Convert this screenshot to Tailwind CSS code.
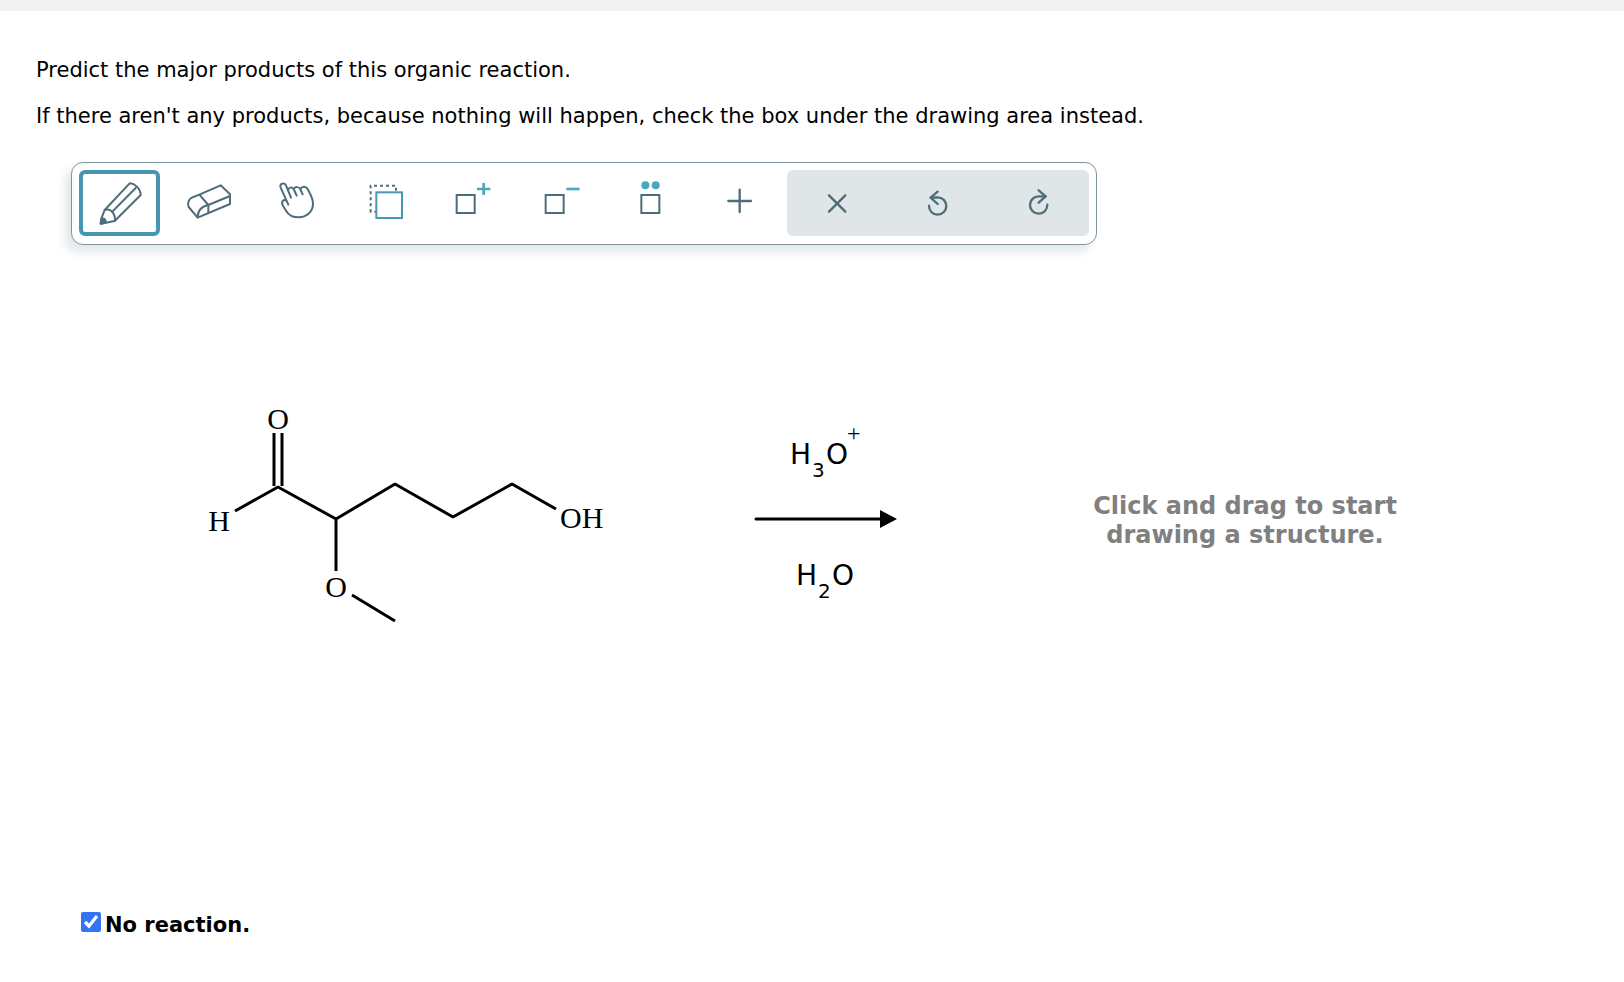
<!DOCTYPE html>
<html lang="en">

<head>
  <meta charset="UTF-8" />
  <meta name="viewport" content="width=device-width, initial-scale=1.0" />
  <title>Organic Reaction Products</title>
  <script src="https://cdn.jsdelivr.net/npm/@tailwindcss/browser@4"></script>
</head>

<body class="bg-white text-black font-['Verdana','DejaVu_Sans',sans-serif]">
  <header class="h-[11px] bg-[#f1f3f5]"></header>

  <main class="px-9 pt-11">
    <div class="flex flex-col gap-4 text-[21px] leading-[30px]">
      <p>Predict the major products of this organic reaction.</p>
      <p>If there aren't any products, because nothing will happen, check the box under the drawing area instead.</p>
    </div>

    <!-- toolbar -->
    <div class="mt-[31px] ml-[35px] flex w-full max-w-[1026px] h-[83px] px-[7px] py-[7px] items-start border border-[#7d949e] rounded-xl bg-white shadow-[-6px_7px_8px_rgba(78,109,122,0.16)] text-[#4e6d7a]">
      <div class="grid flex-1 grid-cols-8 gap-x-2 pr-2">
        <button aria-label="Draw" class="flex h-[66px] items-center justify-center rounded-md border-4 border-[#4697ae]">
          <svg class="size-12 shrink-0" viewBox="0 0 144 144" fill="none" stroke="currentColor" stroke-width="6" stroke-linejoin="round" stroke-linecap="round">
            <path d="M29 93 L104 13 C118 12 137 29 137 48 L59 126 L17 134 L19 119 Z" />
            <path d="M29 93 C37 90 47 92 52 99 C58 106 61 116 59 126" />
            <path d="M52 98 L122 27" />
            <path d="M19 119 C28 117 33 122 32 131 L17 134 Z" fill="currentColor" />
          </svg>
        </button>
        <button aria-label="Erase" class="flex h-[66px] items-center justify-center">
          <svg class="size-12 shrink-0" viewBox="0 0 144 144" fill="none" stroke="currentColor" stroke-width="6" stroke-linejoin="round">
            <path d="M46 47 L110 19 L138 46 L138 75 L41 116 L14 84 C9 70 16 57 28 54 Z" />
            <path d="M46 47 L73 78 L138 51 M73 78 L73 103" />
            <path d="M73 78 C53 82 41 94 41 116" />
          </svg>
        </button>
        <button aria-label="Move" class="flex h-[66px] items-center justify-center">
          <svg class="size-12 shrink-0" viewBox="0 0 144 144" fill="none" stroke="currentColor" stroke-width="6" stroke-linejoin="round" stroke-linecap="round">
            <path d="M49 77 L26 26 C21 14 36 9 42 19 L57 56" />
            <path d="M48 33 C50 25 60 23 65 30 L74 50" />
            <path d="M65 30 C70 22 81 23 85 30 L92 46" />
            <path d="M85 30 C90 21 102 21 107 30 C113 42 123 57 123 74 C123 98 103 115 80 115 C61 115 49 107 42 95 L32 79 C27 66 35 60 43 65" />
          </svg>
        </button>
        <button aria-label="Select" class="flex h-[66px] items-center justify-center">
          <svg class="size-12 shrink-0" viewBox="0 0 144 144" fill="none" stroke="currentColor" stroke-width="6">
            <path d="M45 98 L29 98 L29 20 L105 20 L105 37" stroke-dasharray="9 9" stroke-dashoffset="4" />
            <rect x="46" y="40" width="77" height="77" stroke="#4798b0" />
          </svg>
        </button>
        <button aria-label="Positive charge" class="flex h-[66px] items-center justify-center">
          <svg class="size-12 shrink-0" viewBox="0 0 144 144" fill="none" stroke="currentColor" stroke-width="6">
            <rect x="23" y="48" width="54" height="54" />
            <path d="M84 30 H124 M104 12 V48" stroke="#4ba6c0" stroke-width="8" />
          </svg>
        </button>
        <button aria-label="Negative charge" class="flex h-[66px] items-center justify-center">
          <svg class="size-12 shrink-0" viewBox="0 0 144 144" fill="none" stroke="currentColor" stroke-width="6">
            <rect x="23" y="48" width="54" height="54" />
            <path d="M85 30 H125" stroke="#4ba6c0" stroke-width="8" />
          </svg>
        </button>
        <button aria-label="Lone pair" class="flex h-[66px] items-center justify-center">
          <svg class="size-12 shrink-0" viewBox="0 0 144 144" fill="none" stroke="currentColor" stroke-width="6">
            <rect x="46" y="48" width="54" height="54" />
            <g fill="#4ba6c0" stroke="none">
              <circle cx="58" cy="19" r="12" />
              <circle cx="89" cy="19" r="12" />
            </g>
          </svg>
        </button>
        <button aria-label="Add" class="flex h-[66px] items-center justify-center">
          <svg class="size-12 shrink-0" viewBox="0 0 144 144" fill="none" stroke="currentColor" stroke-width="7" stroke-linecap="round">
            <path d="M40 66 H108 M74 32 V99" />
          </svg>
        </button>
      </div>

      <div class="grid h-[66px] w-[302px] shrink-0 grid-cols-3 rounded-md bg-[#e0e5e7]">
        <button aria-label="Clear" class="flex items-center justify-center">
          <svg class="size-12" viewBox="0 0 144 144" fill="none" stroke="currentColor" stroke-width="7" stroke-linecap="round">
            <path d="M48 49 L97 98 M97 49 L48 98" />
          </svg>
        </button>
        <button aria-label="Undo" class="flex items-center justify-center">
          <svg class="size-12" viewBox="0 0 144 144" fill="none" stroke="currentColor" stroke-width="7" stroke-linecap="round" stroke-linejoin="round">
            <path d="M45 80 A26 26 0 1 0 71 55 L50 56" />
            <path d="M71 38 L50 56 L71 75" />
          </svg>
        </button>
        <button aria-label="Redo" class="flex items-center justify-center">
          <svg class="size-12" viewBox="0 0 144 144" fill="none" stroke="currentColor" stroke-width="7" stroke-linecap="round" stroke-linejoin="round">
            <path d="M97 77 A26 26 0 1 1 71 52 L92 52" />
            <path d="M71 34 L92 52 L71 71" />
          </svg>
        </button>
      </div>
    </div>

    <!-- drawing area -->
    <section class="flex h-[655px] items-start pt-[155px] pl-[164px]">
      <svg class="w-[420px] h-[240px] shrink-0" viewBox="200 400 420 240" role="img" aria-label="Reactant">
        <g fill="none" stroke="#000" stroke-width="3">
          <path d="M274 433 V486 M282 433 V486" />
          <path d="M235 511 L278 487 L336 519 L395 484 L453 517 L512 484 L556 509" stroke-linejoin="bevel" />
          <path d="M336 518 V571 M352 595 L395 621" />
        </g>
        <g class="text-[30px] font-['Liberation_Serif',serif]">
          <text x="278" y="429" text-anchor="middle">O</text>
          <text x="219" y="531" text-anchor="middle">H</text>
          <text x="336" y="597" text-anchor="middle">O</text>
          <text x="560" y="528">OH</text>
        </g>
      </svg>

      <svg class="ml-[120px] w-[180px] h-[240px] shrink-0" viewBox="740 400 180 240" role="img" aria-label="Reaction conditions">
        <g class="text-[28px]">
          <text x="790" y="464">H</text>
          <text x="812" y="477" class="text-[20px]">3</text>
          <text x="826" y="464">O</text>
          <text x="847" y="441" class="text-[24px] font-['Liberation_Serif',serif]">+</text>
          <text x="796" y="585">H</text>
          <text x="818" y="598" class="text-[20px]">2</text>
          <text x="832" y="585">O</text>
        </g>
        <path d="M756 519 H882" stroke="#000" stroke-width="3" stroke-linecap="round" />
        <path d="M880 510 L897 519 L880 528 Z" />
      </svg>

      <p class="mt-[92px] ml-[160px] w-[330px] text-center text-2xl leading-[29px] font-bold text-[#808080]">
        Click and drag to start drawing a structure.
      </p>
    </section>

    <div class="ml-[45px] mt-[10px] flex items-center gap-1">
      <input id="noReaction" type="checkbox" checked class="mb-1.5 size-5 accent-[#3574f0]" />
      <label for="noReaction" class="text-[21px] leading-[30px] font-bold">No reaction.</label>
    </div>
  </main>
</body>

</html>
